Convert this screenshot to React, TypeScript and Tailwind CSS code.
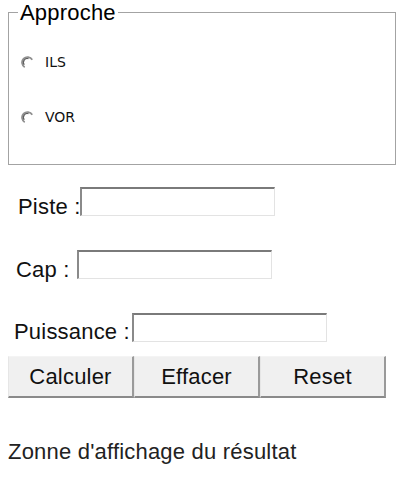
import React from 'react';

const font = { fontFamily: '"Liberation Sans", Arial, sans-serif' };

const Radio = () => (
    <svg width="13" height="13" viewBox="0 0 13 13" className="shrink-0">
        {/* old-style radio: only the upper-left arc is drawn */}
        <path d="M3.75 11.26 A5.5 5.5 0 1 1 11.26 3.75" fill="none" stroke="#8f8f8f" strokeWidth="1.7" />
        <path d="M3.2 8.8 A4 4 0 0 1 7.5 2.6" fill="none" stroke="#5f5f5f" strokeWidth="1.2" />
    </svg>
);

const Field = ({ label, labelLeft, gap, labelTop }: { label: string; labelLeft: string; gap: string; labelTop: string }) => (
    <div className="flex items-start h-[29px]">
        <span className={`${labelLeft} ${labelTop} text-[22px] leading-[25px] tracking-[0.2px] text-[#111] whitespace-pre`}>{label}</span>
        <input
            type="text"
            className={`${gap} w-[195px] h-[29px] bg-white border-t-2 border-l-2 border-b border-r border-t-[#7a7a7a] border-l-[#8a8a8a] border-b-[#e3e3e3] border-r-[#e3e3e3] outline-none`}
        />
    </div>
);

const App: React.FC = () => {
    return (
        <div className="w-[404px] h-[484px] bg-white text-[#111]" style={font}>
            <fieldset className="ml-2 w-[388px] border border-[#a3a3a3] pb-[19px]">
                <legend className="ml-[9px] px-[2px] text-[22px] leading-[25px] tracking-[0.2px] text-black">Approche</legend>
                <div className="pt-[10px] pl-[12px]" style={{ fontFamily: '"DejaVu Sans", Verdana, sans-serif' }}>
                    <label className="flex items-center h-[55px] text-[14px] text-[#111]">
                        <Radio />
                        <span className="ml-[11px]">ILS</span>
                    </label>
                    <label className="flex items-center h-[55px] text-[14px] text-[#111]">
                        <Radio />
                        <span className="ml-[11px]">VOR</span>
                    </label>
                </div>
            </fieldset>

            <div className="mt-[22px] flex flex-col gap-[34px]">
                <Field label="Piste :" labelLeft="ml-[18px]" gap="-ml-px" labelTop="mt-[7px]" />
                <Field label="Cap :" labelLeft="ml-[16px]" gap="ml-[7px]" labelTop="mt-[7px]" />
                <Field label="Puissance :" labelLeft="ml-[14px]" gap="ml-[2px]" labelTop="mt-[6px]" />
            </div>

            <div className="mt-[14px] ml-2 flex">
                {['Calculer', 'Effacer', 'Reset'].map((b) => (
                    <button
                        key={b}
                        className="w-[126px] h-[42px] bg-[#f0f0f0] text-[22px] tracking-[0.2px] text-[#111] border-t border-l border-b-2 border-r-2 border-t-[#f4f4f4] border-l-[#e6e6e6] border-b-[#8a8a8a] border-r-[#9a9a9a]"
                    >
                        {b}
                    </button>
                ))}
            </div>

            <p className="mt-[41px] ml-2 text-[22px] leading-[25px] tracking-[0.2px] text-[#222]">Zonne d'affichage du résultat</p>
        </div>
    );
};

export default App;
